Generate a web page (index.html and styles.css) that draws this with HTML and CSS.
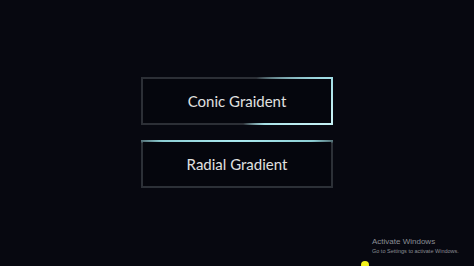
FILE: index.html
```html
<!DOCTYPE html>
<html>
<head>
<meta charset="utf-8">
<link rel="stylesheet" href="styles.css">
</head>
<body>
<main class="stage">
  <div class="btn btn-conic">Conic Graident</div>
  <div class="btn btn-radial">Radial Gradient</div>
</main>
<div class="watermark">
  <div class="wm-title">Activate Windows</div>
  <div class="wm-sub">Go to Settings to activate Windows.</div>
</div>
<div class="cursor-dot"></div>
</body>
</html>
```
FILE: styles.css
```css
html, body {
  margin: 0;
  padding: 0;
  background: #070810;
  height: 266px;
  overflow: hidden;
}
.stage {
  box-sizing: border-box;
  height: 266px;
  display: flex;
  flex-direction: column;
  align-items: center;
  justify-content: center;
  gap: 15px;
  padding-bottom: 2px;
}
.btn {
  box-sizing: border-box;
  width: 192px;
  height: 48px;
  display: flex;
  align-items: center;
  justify-content: center;
  font-family: "Lato", "Open Sans", sans-serif;
  font-weight: 400;
  font-size: 15px;
  color: #e0e0e0;
  background: #05060d;
  border: 2px solid transparent;
}
.btn-conic {
  border-image: conic-gradient(from 0deg at 50% 50%,
    #2c2f36 0deg, #2c2f36 40deg, #9fdce4 75deg, #c8f2f6 100deg, #a6e0e6 130deg, #2c2f36 165deg, #2c2f36 360deg) 1;
}
.btn-radial {
  border-image: radial-gradient(ellipse 58% 8% at 50% 0%, #b0eef4 0%, #8ccdd3 70%, #2c3037 100%) 1;
}
.watermark {
  position: absolute;
  left: 372px;
  top: 237px;
  font-family: "Liberation Sans", Arial, sans-serif;
  color: #8a8d94;
}
.wm-title {
  font-size: 8px;
  line-height: 10px;
}
.wm-sub {
  font-size: 5.5px;
  line-height: 8px;
}
.cursor-dot {
  position: absolute;
  left: 361px;
  top: 261px;
  width: 8px;
  height: 8px;
  border-radius: 50%;
  background: #f2f21a;
}
```
